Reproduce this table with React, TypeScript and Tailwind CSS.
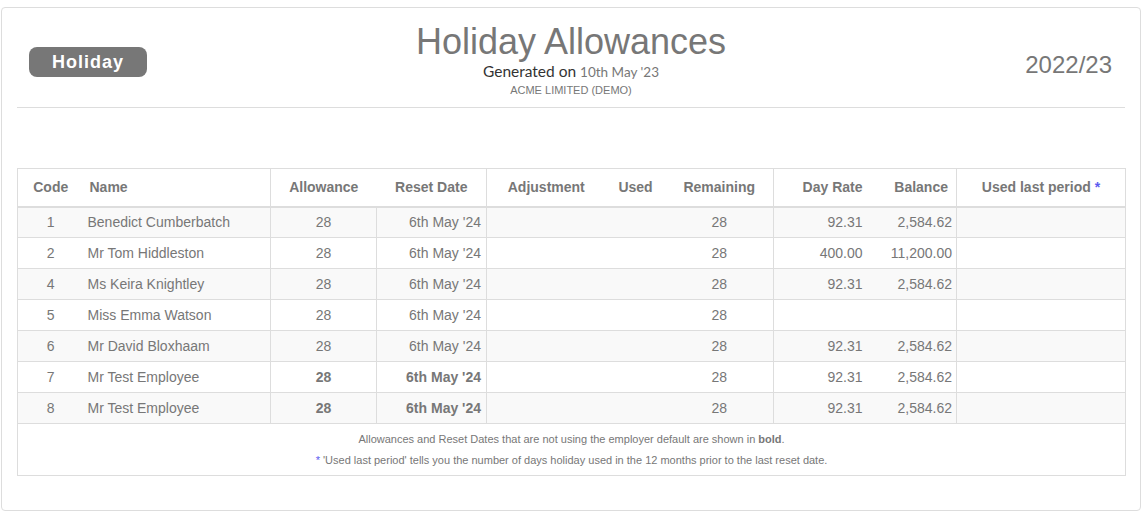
import React from "react"

type Row = {
  code: number
  name: string
  allowance: string
  reset: string
  remaining: string
  dayRate: string
  balance: string
  custom?: boolean
}

const rows: Row[] = [
  { code: 1, name: "Benedict Cumberbatch", allowance: "28", reset: "6th May '24", remaining: "28", dayRate: "92.31", balance: "2,584.62" },
  { code: 2, name: "Mr Tom Hiddleston", allowance: "28", reset: "6th May '24", remaining: "28", dayRate: "400.00", balance: "11,200.00" },
  { code: 4, name: "Ms Keira Knightley", allowance: "28", reset: "6th May '24", remaining: "28", dayRate: "92.31", balance: "2,584.62" },
  { code: 5, name: "Miss Emma Watson", allowance: "28", reset: "6th May '24", remaining: "28", dayRate: "", balance: "" },
  { code: 6, name: "Mr David Bloxhaam", allowance: "28", reset: "6th May '24", remaining: "28", dayRate: "92.31", balance: "2,584.62" },
  { code: 7, name: "Mr Test Employee", allowance: "28", reset: "6th May '24", remaining: "28", dayRate: "92.31", balance: "2,584.62", custom: true },
  { code: 8, name: "Mr Test Employee", allowance: "28", reset: "6th May '24", remaining: "28", dayRate: "92.31", balance: "2,584.62", custom: true },
]

const widths = [66, 187, 106, 110, 119, 60, 108, 97, 86, 169]

export default function App() {
  return (
    <div className="bg-white min-h-[518px] pl-[1px] pt-[7px] font-['Liberation_Sans',Arial,sans-serif]">
      <div className="w-[1140px] h-[504px] border border-[#dddddd] rounded-[4px] px-[15px]">
        {/* header */}
        <div className="grid grid-cols-[1fr_auto_1fr] items-start pt-[14px]">
          <div className="w-[118px] h-[30px] mt-[25px] ml-[12px] rounded-[8px] bg-[#777777] flex items-center justify-center text-white font-bold text-[18px] tracking-[1px]">
            Holiday
          </div>
          <div className="flex flex-col items-center">
            <h1 className="text-[36px] leading-[39px] text-[#777777] font-normal">Holiday Allowances</h1>
            <div className="leading-[20px] font-['Lato','Open_Sans',sans-serif] text-[15.5px] text-[#333333]">
              Generated on <span className="text-[13.5px] text-[#777777]">10th May '23</span>
            </div>
            <div className="mt-[1px] text-[11px] leading-[14px] text-[#777777]">ACME LIMITED (DEMO)</div>
          </div>
          <div className="justify-self-end mt-[29px] mr-[13px] text-[24px] leading-[28px] text-[#777777]">2022/23</div>
        </div>
        <div className="h-px bg-[#dddddd] mt-[10px]" />

        {/* table */}
        <table className="mt-[60px] w-[1108px] table-fixed border-collapse border border-[#dddddd] text-[14px] text-[#777777]">
          <colgroup>
            {widths.map((w, i) => (
              <col key={i} style={{ width: w }} />
            ))}
          </colgroup>
          <thead>
            <tr className="h-[38px] border-b-2 border-[#dddddd] font-bold">
              <th className="text-center font-bold">Code</th>
              <th className="text-left font-bold pl-[6px]">Name</th>
              <th className="text-center font-bold border-l border-[#dddddd]">Allowance</th>
              <th className="text-center font-bold">Reset Date</th>
              <th className="text-center font-bold border-l border-[#dddddd]">Adjustment</th>
              <th className="text-center font-bold">Used</th>
              <th className="text-center font-bold">Remaining</th>
              <th className="text-right font-bold pr-[8px] border-l border-[#dddddd]">Day Rate</th>
              <th className="text-right font-bold pr-[8px]">Balance</th>
              <th className="text-center font-bold border-l border-[#dddddd]">
                Used last period <span className="text-[#5b5bf0]">*</span>
              </th>
            </tr>
          </thead>
          <tbody>
            {rows.map((r, i) => (
              <tr key={i} className={`h-[31px] border-b border-[#dddddd] ${i % 2 === 0 ? "bg-[#f9f9f9]" : "bg-white"}`}>
                <td className="text-center">{r.code}</td>
                <td className="text-left pl-[4px]">{r.name}</td>
                <td className={`text-center border-l border-[#dddddd] ${r.custom ? "font-bold" : ""}`}>{r.allowance}</td>
                <td className={`text-right pr-[5px] border-l border-[#dddddd] ${r.custom ? "font-bold" : ""}`}>{r.reset}</td>
                <td className="border-l border-[#dddddd]"></td>
                <td></td>
                <td className="text-center">{r.remaining}</td>
                <td className="text-right pr-[8px] border-l border-[#dddddd]">{r.dayRate}</td>
                <td className="text-right pr-[4px]">{r.balance}</td>
                <td className="border-l border-[#dddddd]"></td>
              </tr>
            ))}
            <tr>
              <td colSpan={10} className="text-center text-[11px] leading-[21px] pt-[5px] pb-[4px]">
                <div>
                  Allowances and Reset Dates that are not using the employer default are shown in <b>bold</b>.
                </div>
                <div>
                  <span className="text-[#5b5bf0]">*</span> 'Used last period' tells you the number of days holiday used in the 12 months prior to the last reset date.
                </div>
              </td>
            </tr>
          </tbody>
        </table>
      </div>
    </div>
  )
}
